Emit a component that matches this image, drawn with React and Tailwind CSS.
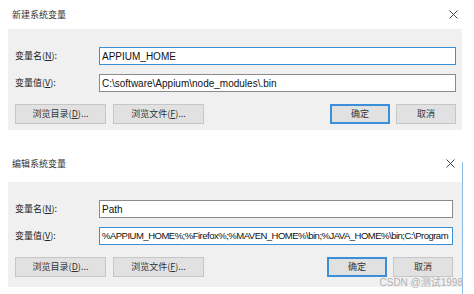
import React from 'react';

const CJK = { fontFamily: '"Noto Sans CJK SC", "Noto Sans", sans-serif' };
const LATIN = { fontFamily: '"Liberation Sans", "Noto Sans CJK SC", sans-serif' };

function Close() {
  return (
    <svg width="9" height="9" viewBox="0 0 9 9" className="block">
      <path d="M0.5 0.5L8.5 8.5M8.5 0.5L0.5 8.5" stroke="#444" strokeWidth="1" fill="none" />
    </svg>
  );
}

function Field({ label, hot, value, focused, tight }) {
  return (
    <div className="flex items-center h-[18px]">
      <div className="w-[90px] pl-[6px] text-[9px] text-[#222]" style={CJK}>
        {label}(<span className="underline">{hot}</span>):
      </div>
      <div
        className={`flex-1 h-[18px] bg-white border flex items-center px-[2px] overflow-hidden whitespace-nowrap text-[#111] ${
          focused ? 'border-[#3b8fd8]' : 'border-[#8a8a8a]'
        } ${tight ? 'text-[9.5px] tracking-[-0.5px]' : 'text-[10px]'}`}
        style={LATIN}
      >
        {value}
      </div>
    </div>
  );
}

function Btn({ children, primary, w = 'w-[91px]' }) {
  return (
    <div
      className={`${w} h-[20px] flex items-center justify-center text-[9px] text-[#333] bg-[#e1e1e1] ${
        primary ? 'border-2 border-[#3b8fd8]' : 'border border-[#c6c6c6]'
      }`}
      style={CJK}
    >
      {children}
    </div>
  );
}

function Dialog({ title, name, value, nameFocused, titleH, padB, padR, tight }) {
  return (
    <div className="bg-white">
      <div className={`flex items-center justify-between pl-[12px] ${titleH} ${tight ? 'pr-[19px]' : 'pr-[16px]'}`}>
        <span className="text-[9px] text-[#333]" style={CJK}>{title}</span>
        <Close />
      </div>
      <div className={`ml-[8px] w-[454px] bg-[#f0f0f0] pt-[18px] ${padR} ${padB}`}>
        <div className="flex flex-col gap-[9px] pl-[1px]">
          <Field label="变量名" hot="N" value={name} focused={nameFocused} />
          <Field label="变量值" hot="V" value={value} focused={!nameFocused} tight={tight} />
        </div>
        <div className="flex items-center mt-[12px] pl-[7px]">
          <Btn>浏览目录(<span className="underline">D</span>)...</Btn>
          <div className="ml-[7px]">
            <Btn>浏览文件(<span className="underline">F</span>)...</Btn>
          </div>
          <div className="flex-1" />
          <Btn primary w="w-[60px]">确定</Btn>
          <div className="ml-[6px]">
            <Btn w="w-[60px]">取消</Btn>
          </div>
        </div>
      </div>
    </div>
  );
}

export default function App() {
  return (
    <div className="relative w-[474px] h-[294px] bg-white overflow-hidden">
      <Dialog
        title="新建系统变量"
        name="APPIUM_HOME"
        value="C:\software\Appium\node_modules\.bin"
        nameFocused
        titleH="h-[29px]"
        padB="pb-[6px]"
        padR="pr-[6px]"
      />
      <div className="h-[15px]" />
      <Dialog
        title="编辑系统变量"
        name="Path"
        value="%APPIUM_HOME%;%Firefox%;%MAVEN_HOME%\bin;%JAVA_HOME%\bin;C:\Program"
        titleH="h-[37px]"
        padB="pb-[10px]"
        padR="pr-[9px]"
        tight
      />
      <div className="absolute left-[462px] top-[162px] w-px h-[132px] bg-[#8cbbe6]" />
      <div
        className="absolute right-[11px] top-[275px] text-[10px] text-[#b0b0b0]"
        style={{ fontFamily: '"Liberation Sans", "Noto Sans CJK SC", sans-serif' }}
      >
        CSDN @测试1998
      </div>
    </div>
  );
}
